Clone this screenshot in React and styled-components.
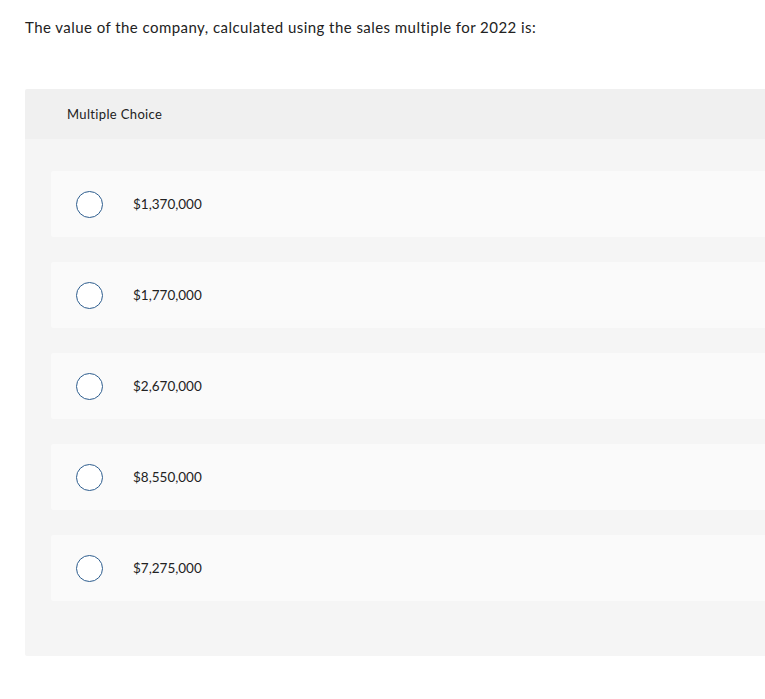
import styled, { createGlobalStyle } from "styled-components";

const GlobalStyle = createGlobalStyle`
  html, body {
    margin: 0;
    padding: 0;
    background: #fff;
    overflow: hidden;
  }
  body {
    font-family: Lato, "Open Sans", Arial, sans-serif;
    color: #222;
  }
`;

const Page = styled.div`
  width: 765px;
  padding: 17px 0 0 25px;
  box-sizing: border-box;
  overflow: hidden;
`;

const Question = styled.p`
  margin: 0;
  font-size: 15px;
  line-height: 20px;
  letter-spacing: 0.45px;
  color: #222;
`;

const Panel = styled.section`
  margin-top: 52px;
  width: 780px;
  border-radius: 2px;
  overflow: hidden;
`;

const PanelHeader = styled.div`
  height: 50px;
  background: #f0f0f0;
  display: flex;
  align-items: center;
  padding-left: 42px;
  font-size: 13px;
  letter-spacing: 0.35px;
  color: #222;
`;

const PanelBody = styled.div`
  background: #f5f5f5;
  padding: 32px 0 55px 26px;
  display: flex;
  flex-direction: column;
  gap: 25px;
`;

const Option = styled.label`
  height: 66px;
  background: #fafafa;
  border-radius: 2px 0 0 2px;
  display: flex;
  align-items: center;
  padding-left: 25px;
  font-size: 13.5px;
  color: #222;
  cursor: pointer;
`;

const Radio = styled.span`
  width: 25px;
  height: 25px;
  border: 1.5px solid #2d5d8e;
  border-radius: 50%;
  background: #fff;
  flex-shrink: 0;
  margin-right: 30px;
`;

const choices = ["$1,370,000", "$1,770,000", "$2,670,000", "$8,550,000", "$7,275,000"];

const App = () => {
  return (
    <Page>
      <GlobalStyle />
      <Question>The value of the company, calculated using the sales multiple for 2022 is:</Question>
      <Panel>
        <PanelHeader>Multiple Choice</PanelHeader>
        <PanelBody>
          {choices.map((c) => (
            <Option key={c}>
              <Radio />
              {c}
            </Option>
          ))}
        </PanelBody>
      </Panel>
    </Page>
  );
};

export default App;
